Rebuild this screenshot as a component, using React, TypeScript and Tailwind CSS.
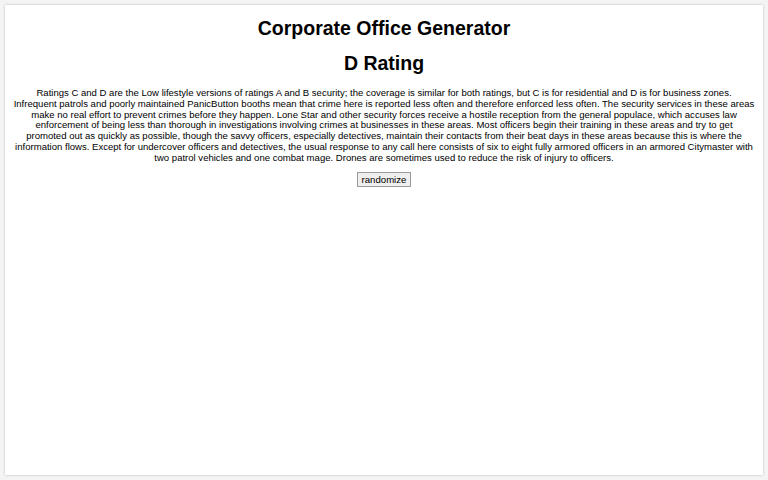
import React, { useState } from "react";

// description is kept line by line so it breaks the same way on every renderer
const lines = [
  "Ratings C and D are the Low lifestyle versions of ratings A and B security; the coverage is similar for both ratings, but C is for residential and D is for business zones.",
  "Infrequent patrols and poorly maintained PanicButton booths mean that crime here is reported less often and therefore enforced less often. The security services in these areas",
  "make no real effort to prevent crimes before they happen. Lone Star and other security forces receive a hostile reception from the general populace, which accuses law",
  "enforcement of being less than thorough in investigations involving crimes at businesses in these areas. Most officers begin their training in these areas and try to get",
  "promoted out as quickly as possible, though the savvy officers, especially detectives, maintain their contacts from their beat days in these areas because this is where the",
  "information flows. Except for undercover officers and detectives, the usual response to any call here consists of six to eight fully armored officers in an armored Citymaster with",
  "two patrol vehicles and one combat mage. Drones are sometimes used to reduce the risk of injury to officers.",
];

const App = () => {
  const [rating] = useState("D");

  return (
    <div className="h-[480px] bg-[#f4f4f4] p-[5px] font-['Liberation_Sans',Arial,sans-serif] text-black">
      <div className="flex h-full flex-col items-center bg-white shadow-[0_0_2px_rgba(0,0,0,0.25)]">
        <h1 className="mt-[12px] text-[19.5px] font-bold leading-[22px]">
          Corporate Office Generator
        </h1>
        <h2 className="mt-[13px] text-[19.5px] font-bold leading-[22px]">
          {rating} Rating
        </h2>
        <p className="mt-[14px] w-[756px] whitespace-nowrap text-center text-[9.55px] leading-[10.75px]">
          {lines.map((line, i) => (
            <React.Fragment key={i}>
              {line}
              {i < lines.length - 1 && <br />}
            </React.Fragment>
          ))}
        </p>
        <button className="mt-[9px] border border-[#9a9a9a] bg-[#efefef] px-[4px] text-[9.6px] leading-[13px]">
          randomize
        </button>
      </div>
    </div>
  );
};

export default App;
